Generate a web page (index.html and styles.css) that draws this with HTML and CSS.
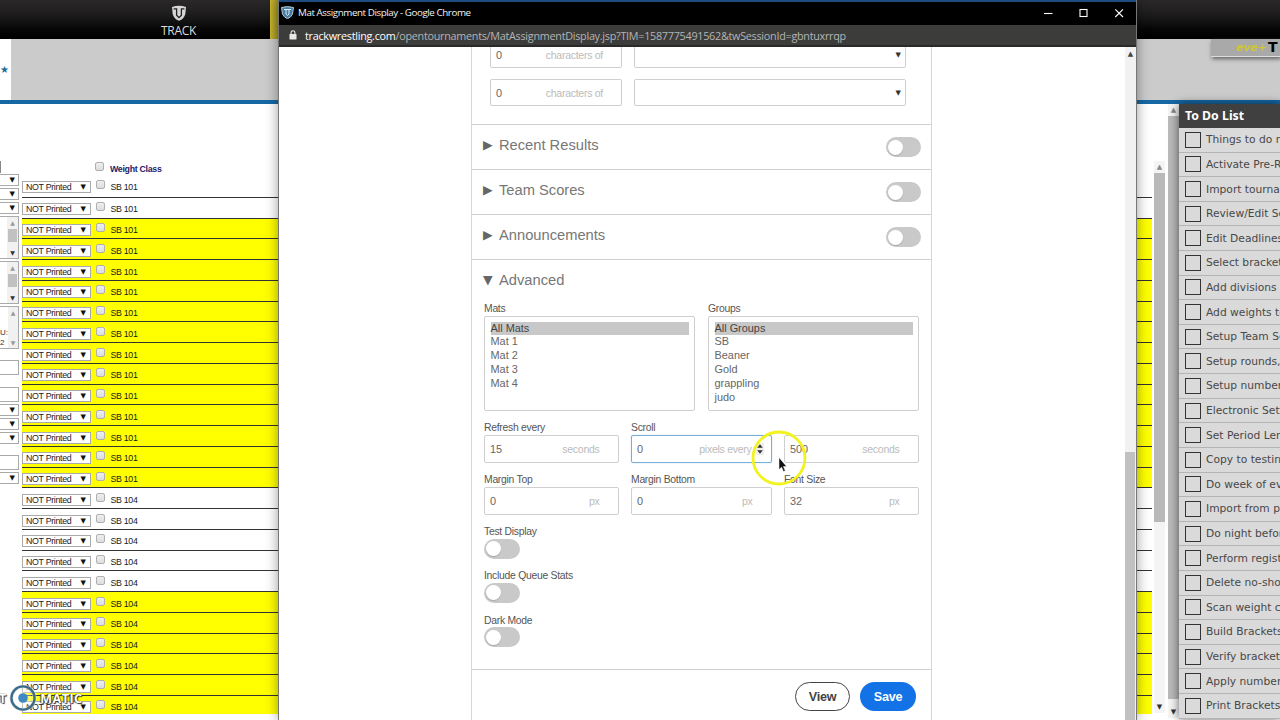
FILE: index.html
```html
<!DOCTYPE html>
<html lang="en">
<head>
  <meta charset="UTF-8" />
  <title>Mat Assignment Display</title>
  <link rel="stylesheet" href="styles.css">
</head>
<body>

  <header class="topbar">
    <div class="brand">
      <svg width="16" height="16" viewBox="0 0 16 16">
        <path d="M1 2 Q8 -0.5 15 2 L14.3 9 Q13 14 8 15.8 Q3 14 1.7 9 Z" fill="#d6d6d6"/>
        <path d="M2.6 3.9 H5.6 V10.2 L8 12.6 L10.4 10.2 V3.9 H13.4" fill="none" stroke="#222" stroke-width="1.3"/>
        <path d="M8 3 V10.6" stroke="#d6d6d6" stroke-width="2"/>
      </svg>
      <span>TRACK</span>
    </div>
    <div class="top-tab"></div>
  </header>
  <div class="band">
    <div class="band-tab">★</div>
    <div class="event-tag"><em>eve+</em><b>T</b></div>
  </div>

  <main class="page">
    <div class="fields">
      <div class="field-stub"></div>
      <div class="field sel">▼</div>
      <div class="field sel">▼</div>
      <div class="field sel">▼</div>
      <div class="field area"><div class="mini-bar"><i>▲</i><b></b><i class="dark">▼</i></div></div>
      <div class="field area"><div class="mini-bar"><i>▲</i><b></b><i class="dark">▼</i></div></div>
      <div class="field area last"><span>U:<br>2</span><div class="mini-bar"><i>▲</i><i>▼</i></div></div>
      <div class="field inp"></div>
      <div class="field inp short"></div>
      <div class="field sel">▼</div>
      <div class="field sel">▼</div>
      <div class="field sel">▼</div>
      <div class="field inp lower"></div>
      <div class="field sel">▼</div>
    </div>
    <div class="brackets">
      <div class="brackets-head"><span class="check"></span><strong>Weight Class</strong></div>
      <div id="rows"></div>
    </div>
    <div class="scroll inner"><i>▲</i><div class="thumb"></div><i class="dark end">▼</i></div>
    <div class="scroll outer"><i>▲</i><div class="thumb"></div><i class="dark end">▼</i></div>
  </main>

  <aside class="todo">
    <h2>To Do List</h2>
    <ul id="todo-items"></ul>
  </aside>

  <section class="popup">
    <div class="titlebar">
      <svg class="favicon" width="13" height="13" viewBox="0 0 13 13">
        <path d="M0.5 1.5 Q6.5 -0.3 12.5 1.5 L11.5 8 Q10 11.5 6.5 12.7 Q3 11.5 1.5 8 Z" fill="#3f7fa9" stroke="#b9c4cb" stroke-width="1"/>
        <path d="M3 3.5 H10 M5 3.5 V8 L6.5 9.5 L8 8 V3.5" fill="none" stroke="#e4e9ec" stroke-width="1"/>
      </svg>
      <span class="title">Mat Assignment Display - Google Chrome</span>
      <svg class="win-buttons" width="90" height="12" viewBox="0 0 90 12" fill="none" stroke="#fff" stroke-width="1.1">
        <path d="M4 6.5 H12.5"/>
        <rect x="40" y="2.5" width="7" height="7"/>
        <path d="M75.3 2.3 L83 10 M83 2.3 L75.3 10"/>
      </svg>
    </div>
    <div class="urlbar">
      <svg width="8" height="10" viewBox="0 0 8 10">
        <rect x="0.5" y="4" width="7" height="5.5" rx="0.6" fill="#e8e8e8"/>
        <path d="M2.1 4.2 V2.6 A1.9 1.9 0 0 1 5.9 2.6 V4.2" fill="none" stroke="#e8e8e8" stroke-width="1.1"/>
      </svg>
      <span class="url"><b>trackwrestling.com</b>/opentournaments/MatAssignmentDisplay.jsp?TIM=1587775491562&amp;twSessionId=gbntuxrrqp</span>
    </div>

    <div class="viewport">
      <div class="panel">
        <div class="columns">
          <div class="box cut"><span>0</span><small>characters of</small></div>
          <div class="box cut pick">▼</div>
          <div class="box"><span>0</span><small>characters of</small></div>
          <div class="box pick">▼</div>
        </div>
        <div class="section"><i>▶</i><h3>Recent Results</h3><span class="toggle"></span></div>
        <div class="section"><i>▶</i><h3>Team Scores</h3><span class="toggle"></span></div>
        <div class="section"><i>▶</i><h3>Announcements</h3><span class="toggle"></span></div>

        <div class="advanced">
          <div class="advanced-title"><i>▼</i><h3>Advanced</h3></div>
          <div class="lists">
            <div>
              <label>Mats</label>
              <ul class="list">
                <li class="selected">All Mats</li>
                <li>Mat 1</li>
                <li>Mat 2</li>
                <li>Mat 3</li>
                <li>Mat 4</li>
              </ul>
            </div>
            <div>
              <label>Groups</label>
              <ul class="list">
                <li class="selected">All Groups</li>
                <li>SB</li>
                <li>Beaner</li>
                <li>Gold</li>
                <li>grappling</li>
                <li>judo</li>
              </ul>
            </div>
          </div>
          <div class="numbers">
            <div><label>Refresh every</label><div class="box"><span>15</span><small>seconds</small></div></div>
            <div><label>Scroll</label><div class="box focused"><span>0</span><small>pixels every</small>
              <svg class="spin" width="8" height="12" viewBox="0 0 8 12"><path d="M1.2 4.7 L4 1.2 L6.8 4.7 Z M1.2 7.2 L4 10.7 L6.8 7.2 Z" fill="#333"/></svg></div></div>
            <div><label>&nbsp;</label><div class="box"><span>500</span><small>seconds</small></div></div>
            <div><label>Margin Top</label><div class="box"><span>0</span><small>px</small></div></div>
            <div><label>Margin Bottom</label><div class="box"><span>0</span><small>px</small></div></div>
            <div><label>Font Size</label><div class="box"><span>32</span><small>px</small></div></div>
          </div>
          <div class="switches">
            <div><label>Test Display</label><span class="toggle"></span></div>
            <div><label>Include Queue Stats</label><span class="toggle"></span></div>
            <div><label>Dark Mode</label><span class="toggle"></span></div>
          </div>
        </div>

        <div class="actions">
          <button class="view">View</button>
          <button class="save">Save</button>
        </div>
      </div>
      <div class="popup-scroll"><i>▲</i><div class="thumb"></div></div>
    </div>
  </section>

  <svg class="pointer" width="58" height="58" viewBox="0 0 58 58">
    <circle cx="29" cy="29" r="26" fill="none" stroke="#f2f21c" stroke-width="2.8"/>
    <path d="M29 28.5 V40.5 L31.6 38.2 L33.5 42.6 L35.3 41.8 L33.4 37.6 L36.6 37.4 Z" fill="#111" stroke="#fff" stroke-width="0.5"/>
  </svg>

  <div class="watermark">
    <span>T</span>
    <svg width="28" height="28" viewBox="0 0 28 28">
      <circle cx="14" cy="14" r="11.6" fill="none" stroke="#dfe8ee" stroke-width="4" opacity="0.6"/>
      <circle cx="14" cy="14" r="11.6" fill="none" stroke="#3d6c88" stroke-width="2.4"/>
      <circle cx="14" cy="14" r="8.6" fill="#fff" fill-opacity="0.35"/>
      <circle cx="14" cy="14" r="4.8" fill="#3f8ac4"/>
    </svg>
    <span>MATIC</span>
  </div>

  <script>
    // runs of bracket rows: [how many, weight, highlighted]
    const runs = [[2, "101", false], [13, "101", true], [5, "104", false], [6, "104", true]];
    const rows = document.getElementById("rows");

    runs.forEach(([count, weight, yellow]) => {
      for (let i = 0; i < count; i++) {
        const row = document.createElement("div");
        row.className = yellow ? "row yellow" : "row";
        row.innerHTML = `<span class="printed">NOT Printed<i>▼</i></span><span class="check"></span><span>SB ${weight}</span>`;
        rows.appendChild(row);
      }
    });

    const todos = [
      "Things to do now", "Activate Pre-Reg", "Import tournament", "Review/Edit Settings",
      "Edit Deadlines", "Select brackets", "Add divisions", "Add weights to", "Setup Team Scores",
      "Setup rounds, etc", "Setup numbers", "Electronic Settings", "Set Period Lengths",
      "Copy to testing", "Do week of event", "Import from pre", "Do night before",
      "Perform registration", "Delete no-shows", "Scan weight cards", "Build Brackets",
      "Verify brackets", "Apply numbers", "Print Brackets"
    ];
    document.getElementById("todo-items").innerHTML =
      todos.map(text => `<li><span></span>${text}</li>`).join("");
  </script>

</body>
</html>
```

FILE: styles.css
```css
* {
  box-sizing: border-box;
}

body {
  margin: 0;
  width: 1280px;
  height: 720px;
  overflow: hidden;
  position: relative;
  background: #fff;
  font-family: "Liberation Sans", Arial, sans-serif;
}

i {
  font-style: normal;
  font-family: "DejaVu Sans", sans-serif;
}

ul, h2, h3 {
  margin: 0;
  padding: 0;
  list-style: none;
}

label {
  display: block;
}

/* page behind the popup */

.topbar {
  height: 39px;
  display: flex;
  background: linear-gradient(#2b2829, #1c1b1c 40%, #060606 75%, #000);
}

.brand {
  width: 117px;
  margin-left: 120px;
  padding-top: 5px;
  display: flex;
  flex-direction: column;
  align-items: center;
  color: #ddd;
  font: 12px/16px "Open Sans", sans-serif;
  letter-spacing: -0.3px;
}

.brand span {
  margin-top: 2px;
}

.top-tab {
  width: 12px;
  margin-left: 33px;
  background: linear-gradient(90deg, #c9b52b, #8f8420);
}

.band {
  height: 65px;
  display: flex;
  justify-content: space-between;
  background: #cbcbcb;
  border-bottom: 4px solid #1668a5;
}

.band-tab {
  width: 11px;
  background: #fff;
  color: #1b6ba3;
  font: 10px/62px "DejaVu Sans", sans-serif;
}

.event-tag {
  width: 69px;
  height: 18px;
  padding-left: 25px;
  display: flex;
  background: #a9a9a9;
  box-shadow: 1px 2px 4px #666;
  border-bottom: 1px solid #ddd;
  font: 14px/17px "DejaVu Sans", sans-serif;
}

.event-tag em {
  width: 32px;
  color: #cfc636;
  font-weight: bold;
  font-size: 11px;
  letter-spacing: -0.2px;
}

.page {
  height: 616px;
  display: flex;
}

.fields {
  width: 22px;
  font-size: 8px;
}

.field-stub {
  width: 1px;
  height: 12px;
  margin: 57px 0 1px;
  background: #888;
}

.field {
  width: 19px;
  border: 1px solid #aaa;
  border-left: 0;
  display: flex;
  justify-content: flex-end;
}

.sel {
  height: 12px;
  margin-bottom: 2px;
  padding-right: 3px;
  font: 7px/10px "DejaVu Sans", sans-serif;
  color: #111;
}

.area {
  height: 43px;
  margin-bottom: 2px;
  line-height: 10px;
  color: #333;
}

.area span {
  padding-top: 21px;
}

.area.last {
  margin-bottom: 11px;
}

.mini-bar {
  width: 11px;
  background: #f1f1f1;
  display: flex;
  flex-direction: column;
  justify-content: space-between;
  align-items: center;
  font-size: 6px;
  line-height: 11px;
  color: #999;
}

.mini-bar b {
  width: 9px;
  height: 13px;
  margin-bottom: 5px;
  background: #c1c1c1;
}

.dark {
  color: #333;
}

.inp {
  height: 15px;
  margin-bottom: 12px;
}

.inp.short {
  margin-bottom: 2px;
}

.inp.lower {
  margin: 11px 0 2px;
}

.brackets {
  width: 1130px;
  font-size: 8.8px;
  letter-spacing: -0.3px;
  color: #222;
}

.brackets-head {
  height: 73px;
  padding: 58px 0 0 73px;
  display: flex;
  color: #22226a;
}

.brackets-head strong {
  margin: 2px 0 0 6px;
}

.check {
  width: 9px;
  height: 9px;
  flex: none;
  border: 1px solid #b0b0b0;
  border-radius: 2px;
  background: linear-gradient(#eee, #ddd);
}

.row {
  height: 20.76px;
  padding-top: 4.5px;
  display: flex;
  border-bottom: 1px solid #333;
}

.row:first-child {
  padding-top: 3px;
}

.row .check {
  margin: 0 5.5px 0 5.5px;
}

.row > span:last-child {
  margin-top: 2px;
  line-height: 10px;
}

.row:last-child {
  height: 18px;
  border: 0;
}

.yellow {
  background: #ff0;
}

.printed {
  width: 68.5px;
  height: 12px;
  margin-top: 1px;
  padding: 0 4px 0 3px;
  display: flex;
  justify-content: space-between;
  line-height: 10px;
  background: #fff;
  border: 1px solid #aaa;
}

.printed i {
  font-size: 7px;
  color: #111;
}

.scroll {
  display: flex;
  flex-direction: column;
  align-items: center;
  background: #f4f4f4;
  color: #888;
  font-size: 7px;
  line-height: 12px;
}

.scroll .end {
  margin-top: auto;
}

.scroll .thumb {
  width: 100%;
  background: #b9b9b9;
}

.inner {
  width: 11px;
  height: 552px;
  margin: 57px 3px 0 2px;
}

.inner .thumb {
  height: 349px;
}

.outer {
  width: 11px;
  height: 614px;
}

.outer .thumb {
  height: 583px;
}

.todo {
  position: absolute;
  left: 1179px;
  top: 104px;
  width: 101px;
  height: 615px;
  overflow: hidden;
  background: #dadada;
  box-shadow: 0 0 9px rgba(0, 0, 0, 0.6);
  font-family: "DejaVu Sans", Verdana, sans-serif;
}

.todo h2 {
  height: 24px;
  padding-left: 6px;
  background: #404040;
  color: #fff;
  font: bold 12.3px/23px "Noto Sans", sans-serif;
}

.todo li {
  height: 24.61px;
  padding-left: 6px;
  display: flex;
  align-items: center;
  border-bottom: 1px solid #b4b4b4;
  color: #484848;
  font-size: 10.7px;
  white-space: nowrap;
}

.todo li span {
  width: 16px;
  height: 16px;
  margin-right: 5px;
  flex: none;
  border: 1.5px solid #333;
}

/* popup window */

.popup {
  position: absolute;
  left: 278px;
  top: 0;
  width: 859px;
  height: 720px;
  border-left: 1px solid #777;
  border-right: 1px solid #777;
  background: #fff;
  box-shadow: 0 0 12px rgba(0, 0, 0, 0.4);
}

.titlebar {
  height: 25px;
  padding: 0 6px 2px 2px;
  display: flex;
  align-items: center;
  border-top: 2px solid #1f4c80;
  background: #000;
}

.title {
  margin: 0 auto 0 4px;
  color: #f2f2f2;
  font: 500 9.8px "Open Sans", sans-serif;
  letter-spacing: -0.43px;
}

.urlbar {
  height: 22px;
  padding-left: 10px;
  display: flex;
  align-items: center;
  background: #3c3c3b;
  border-bottom: 2px solid #292929;
  color: #b4b4b4;
  font: 10.8px "Open Sans", sans-serif;
  letter-spacing: -0.27px;
}

.url {
  margin-left: 8px;
}

.url b {
  color: #fff;
  font-weight: 500;
}

.viewport {
  height: 673px;
  display: flex;
  overflow: hidden;
}

.panel {
  width: 461px;
  margin-left: 192px;
  border: 1px solid #d6d6d6;
  border-width: 0 1px;
  color: #666;
  font-size: 10.9px;
}

.popup-scroll {
  width: 11px;
  margin-left: auto;
  background: #f1f1f1;
  color: #444;
  text-align: center;
  font-size: 7px;
  line-height: 14px;
}

.popup-scroll .thumb {
  width: 10px;
  height: 300px;
  margin-top: 391px;
  background: #c1c1c1;
}

.columns {
  height: 78px;
  margin-top: -6px;
  display: grid;
  grid-template-columns: 132px 272px;
  grid-template-rows: 27px 27px;
  gap: 11px 12px;
  padding-left: 18px;
  margin-bottom: 5px;
}

.box {
  height: 27px;
  padding: 0 18px 0 5px;
  display: flex;
  align-items: center;
  justify-content: space-between;
  border: 1px solid #cfcfcf;
  border-radius: 2px;
}

.box small {
  font-size: 10.5px;
  letter-spacing: -0.27px;
  color: #bbb;
}

.box.pick {
  justify-content: flex-end;
  padding-right: 4px;
  font: 7px "DejaVu Sans", sans-serif;
  color: #333;
}

.section {
  height: 45px;
  padding: 0 10px 0 11px;
  display: flex;
  border-top: 1px solid #cfcfcf;
}

.section i,
.advanced-title i {
  width: 16px;
  font-size: 12.5px;
  line-height: 39px;
  color: #666;
}

h3 {
  font-size: 14.7px;
  font-weight: normal;
  line-height: 41px;
  color: #777;
}

.toggle {
  display: block;
  width: 35.5px;
  height: 20px;
  padding-top: 0.5px;
  border-radius: 10px;
  background: #c9c9c9;
}

.toggle::before {
  content: "";
  display: block;
  width: 15px;
  height: 15px;
  margin: 2px;
  border-radius: 50%;
  background: #fff;
  box-shadow: 0 1px 1px #aaa;
}

.section .toggle {
  margin: 12px 0 0 auto;
}

.advanced {
  height: 410px;
  padding-left: 12px;
  border-top: 1px solid #cfcfcf;
}

.advanced-title {
  display: flex;
  height: 43px;
}

.advanced-title i {
  width: 15px;
  margin-left: -1px;
}

.advanced-title h3 {
  margin-left: 1px;
}

.advanced label {
  font-size: 10.4px;
  letter-spacing: -0.28px;
  line-height: 12px;
  color: #555;
}

.lists {
  display: grid;
  grid-template-columns: 211px 211px;
  gap: 13px;
}

.list {
  height: 95px;
  margin-top: 1px;
  padding: 4.5px 5.5px;
  border: 1px solid #cfcfcf;
  border-radius: 2px;
  line-height: 13.9px;
}

.list .selected {
  background: #c8c8c8;
  color: #444;
}

.numbers {
  margin-top: 11px;
  display: grid;
  grid-template-columns: 134.5px 140.5px 134.5px;
  grid-auto-rows: 41px;
  gap: 11px 12.5px;
}

.numbers .box {
  height: 28px;
  margin-top: 1px;
}

.box.focused {
  padding-right: 7px;
  border-color: #78addc;
  box-shadow: 0 0 1px #78addc;
}

.focused small {
  margin: 0 4px 0 auto;
}

.spin {
  background: #eee;
}

.switches {
  margin-top: 11px;
}

.switches div {
  height: 44.4px;
}

.switches .toggle {
  margin-top: 0.6px;
}

.actions {
  height: 60px;
  padding: 12px 15px 0;
  display: flex;
  justify-content: flex-end;
  gap: 10px;
  border-top: 1px solid #cfcfcf;
}

button {
  height: 29px;
  border-radius: 15px;
  font: bold 12.6px "Liberation Sans", sans-serif;
  letter-spacing: -0.2px;
}

.view {
  width: 55px;
  padding: 0;
  border: 1px solid #444;
  background: #fff;
  color: #444;
}

.save {
  width: 56px;
  padding: 0;
  border: 0;
  background: #1272e6;
  color: #fff;
}

/* things drawn on top */

.pointer {
  position: absolute;
  left: 749.5px;
  top: 429px;
}

.watermark {
  position: absolute;
  left: -1px;
  top: 684px;
  display: flex;
  align-items: center;
  color: #fff;
  font: bold 12.5px "Open Sans", sans-serif;
  letter-spacing: 0.5px;
  text-shadow: 0 0 1px #333, 1px 1px 1px #333, -1px 0 1px #444;
}

.watermark svg {
  margin: 0 3px 0 2.5px;
}
```
